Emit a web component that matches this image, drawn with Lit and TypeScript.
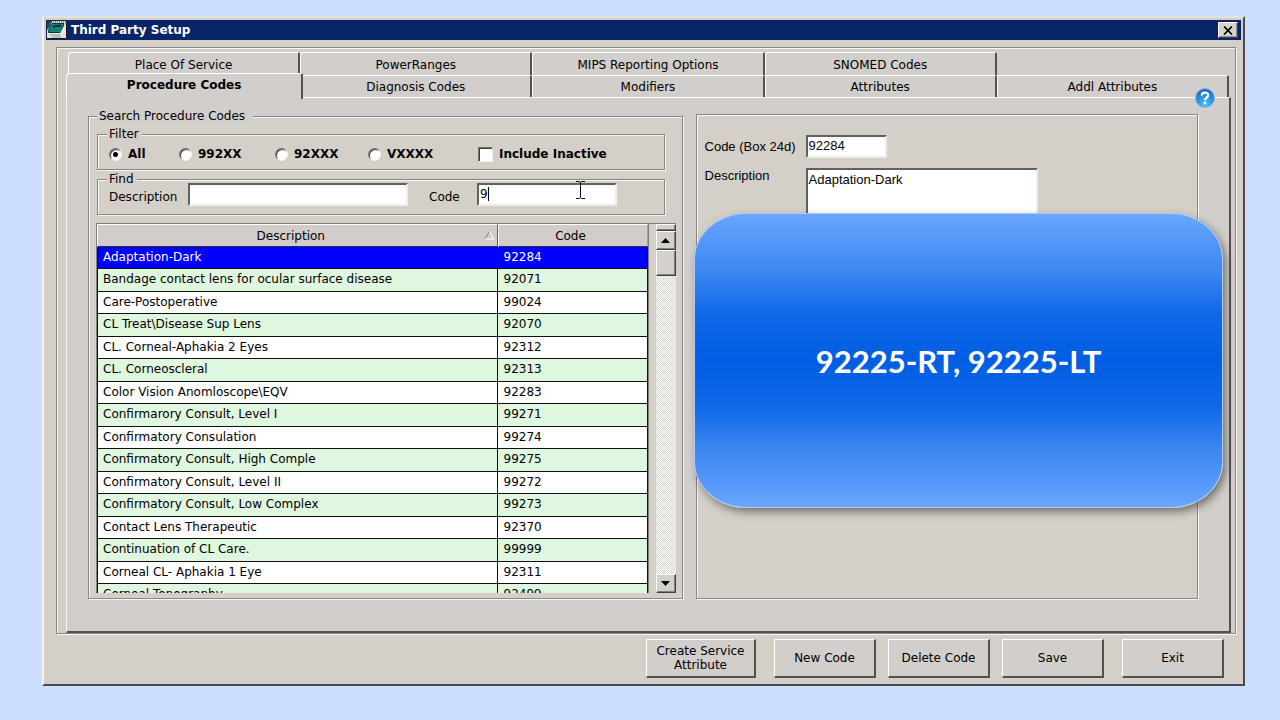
import { LitElement, html, css, svg } from "lit";
import { customElement, state } from "lit/decorators.js";
import { classMap } from "lit/directives/class-map.js";

interface Procedure {
  description: string;
  code: string;
}

const PROCEDURES: Procedure[] = [
  { description: "Adaptation-Dark", code: "92284" },
  { description: "Bandage contact lens for ocular surface disease", code: "92071" },
  { description: "Care-Postoperative", code: "99024" },
  { description: "CL Treat\\Disease Sup Lens", code: "92070" },
  { description: "CL. Corneal-Aphakia 2 Eyes", code: "92312" },
  { description: "CL. Corneoscleral", code: "92313" },
  { description: "Color Vision Anomloscope\\EQV", code: "92283" },
  { description: "Confirmarory Consult, Level I", code: "99271" },
  { description: "Confirmatory Consulation", code: "99274" },
  { description: "Confirmatory Consult, High Comple", code: "99275" },
  { description: "Confirmatory Consult, Level II", code: "99272" },
  { description: "Confirmatory Consult, Low Complex", code: "99273" },
  { description: "Contact Lens Therapeutic", code: "92370" },
  { description: "Continuation of CL Care.", code: "99999" },
  { description: "Corneal CL- Aphakia 1 Eye", code: "92311" },
  { description: "Corneal Topography", code: "92499" },
];

const BACK_TABS = ["Place Of Service", "PowerRanges", "MIPS Reporting Options", "SNOMED Codes"];
const FRONT_TABS = ["Procedure Codes", "Diagnosis Codes", "Modifiers", "Attributes", "Addl Attributes"];
const FILTERS = ["All", "992XX", "92XXX", "VXXXX"];

@customElement("procedure-grid")
export class ProcedureGrid extends LitElement {
  @state() private selected = 0;

  static styles = css`
    :host {
      display: flex;
      gap: 7px;
      min-height: 0;
      overflow: hidden;
      border-top: 1px solid #808080;
      border-left: 1px solid #808080;
    }
    .viewport {
      flex: 1;
      min-width: 0;
      overflow: hidden;
      border-right: 1px solid #808080;
    }
    table {
      width: 100%;
      border-collapse: separate;
      border-spacing: 0;
      table-layout: fixed;
    }
    .col-code {
      width: 150px;
    }
    th {
      height: 23px;
      box-sizing: border-box;
      padding: 0 8px 0 6px;
      font-weight: normal;
      background: #d2cdca;
      border-top: 1px solid #fff;
      border-left: 1px solid #fff;
      border-right: 1px solid #606060;
      border-bottom: 1px solid #303030;
    }
    th.last {
      padding-right: 10px;
      border-right-color: #a0a0a0;
    }
    .head {
      display: flex;
      align-items: center;
    }
    .head span {
      flex: 1;
    }
    .sort {
      width: 11px;
      height: 9px;
      margin-right: -6px;
      margin-left: 6px;
    }
    td {
      height: 22px;
      box-sizing: border-box;
      padding: 0 6px 2px;
      white-space: nowrap;
      background: #fff;
      border-bottom: 1px solid #101010;
      border-right: 1px solid #101010;
    }
    td:first-child {
      padding-left: 5px;
      border-left: 1px solid #101010;
    }
    tr:nth-child(even) td {
      height: 23px;
      background: #dff6df;
    }
    tr.selected td {
      background: #0000ff;
      color: #fff;
    }
    .scroll {
      width: 20px;
      display: flex;
      flex-direction: column;
      background: repeating-conic-gradient(#fff 0 25%, #d6d2cc 0 50%) 0 0 / 2px 2px;
    }
    .scroll button,
    .split,
    .thumb {
      flex: none;
      box-sizing: border-box;
      background: #d4d0cb;
      border: 1px solid;
      border-color: #fff #404040 #404040 #fff;
      box-shadow: inset -1px -1px #808080;
    }
    .scroll button {
      height: 19px;
      padding: 0;
      display: grid;
      place-items: center;
    }
    .split {
      height: 7px;
    }
    .thumb {
      height: 26px;
    }
    .track {
      flex: 1;
    }
  `;

  render() {
    return html`
      <div class="viewport">
        <table>
          <colgroup>
            <col />
            <col class="col-code" />
          </colgroup>
          <thead>
            <tr>
              <th scope="col">
                <div class="head">
                  <span>Description</span>
                  <svg class="sort" viewBox="0 0 11 9">
                    <path d="M1 8L5.5 .5" stroke="#808080" fill="none" />
                    <path d="M5.5 .5L10 8H1" stroke="#fff" fill="none" />
                  </svg>
                </div>
              </th>
              <th scope="col" class="last">Code</th>
            </tr>
          </thead>
          <tbody>
            ${PROCEDURES.map(
              (row, i) => html`<tr
                class=${classMap({ selected: i === this.selected })}
                @click=${() => (this.selected = i)}
              >
                <td>${row.description}</td>
                <td>${row.code}</td>
              </tr>`
            )}
          </tbody>
        </table>
      </div>
      <div class="scroll">
        <div class="split"></div>
        <button type="button" aria-label="Scroll up">
          <svg width="9" height="5" viewBox="0 0 9 5"><path d="M0 5L4.5 0L9 5Z" /></svg>
        </button>
        <div class="thumb"></div>
        <div class="track"></div>
        <button type="button" aria-label="Scroll down">
          <svg width="9" height="5" viewBox="0 0 9 5"><path d="M0 0L4.5 5L9 0Z" /></svg>
        </button>
      </div>
    `;
  }
}

@customElement("app-root")
export class AppRoot extends LitElement {
  @state() private filter = "All";

  static styles = css`
    :host {
      display: flex;
      box-sizing: border-box;
      height: 100vh;
      padding: 16px 35px 34px 42px;
      background: #cedeff;
      color: #000;
      font: 12px/14px "DejaVu Sans", sans-serif;
    }
    button,
    input,
    textarea {
      font: inherit;
      color: inherit;
      border-radius: 0;
    }
    .window {
      position: relative;
      flex: 1;
      min-width: 0;
      display: flex;
      flex-direction: column;
      box-sizing: border-box;
      padding: 2px;
      background: #d4d0c8;
      border: 2px solid;
      border-color: #e4e2dc #454a54 #454a54 #f4f2ee;
    }
    .titlebar {
      flex: none;
      height: 20px;
      display: flex;
      align-items: center;
      gap: 4px;
      padding: 0 3px 0 1px;
      background: #0a246a;
      color: #fff;
      font-weight: bold;
    }
    .titlebar h1 {
      flex: 1;
      margin: 0;
      font: inherit;
    }
    .app-icon {
      width: 20px;
      height: 18px;
    }
    .close {
      width: 20px;
      height: 16px;
      padding: 0;
      display: grid;
      place-items: center;
      background: #d8d4ce;
      border: 1px solid;
      border-color: #fff #404040 #404040 #fff;
      box-shadow: inset -1px -1px #909090;
    }
    .frame {
      flex: 1;
      min-height: 0;
      display: flex;
      flex-direction: column;
      margin: 7px 5px 0 10px;
      padding: 4px 4px 0 9px;
      background: #d2cecb;
      border: 1px solid #868686;
      box-shadow: inset 1px 1px #f8f6f2, 1px 1px #f8f6f2;
    }
    .tabs {
      flex: none;
      display: grid;
      grid-template-columns: repeat(5, 1fr);
      grid-template-rows: 23px 22px;
      padding: 0 2px;
    }
    .tab {
      box-sizing: border-box;
      padding: 1px 0 0;
      background: #d2cecb;
      border: solid #fff;
      border-width: 1px 2px 0 1px;
      border-right-color: #55504e;
      border-radius: 3px 2px 0 0;
    }
    .tab.front {
      grid-row: 2;
    }
    .tab.active {
      position: relative;
      margin: -2px -3px -2px -2px;
      padding-bottom: 4px;
      font-weight: bold;
    }
    .pane {
      flex: 1;
      min-height: 0;
      display: flex;
      gap: 12px;
      padding: 11px 30px 31px 21px;
      border: solid;
      border-width: 1px 2px 2px 1px;
      border-color: #fff #55504e #55504e #f4f2ee;
    }
    fieldset {
      min-width: 0;
      box-sizing: border-box;
      margin: 0 1px 1px 0;
      padding: 0;
      border: 1px solid #868686;
      box-shadow: inset 1px 1px #f8f6f2, 1px 1px #f8f6f2;
      background: #d4d0c8;
    }
    legend {
      padding: 0 3px 0 2px;
      background: #d3cfca;
    }
    .search {
      flex: 597 1 0;
      display: flex;
      flex-direction: column;
      padding: 4px 6px 5px 8px;
    }
    .search > legend {
      padding-right: 8px;
      background: #d2cecb;
    }
    .sub {
      flex: none;
      margin: 0 11px 2px 0;
      padding: 0 10px 0 11px;
    }
    .sub legend {
      margin-left: -2px;
    }
    .filters {
      display: grid;
      grid-template-columns: 70px 96px 93px 110px 1fr;
      align-items: center;
      height: 26px;
      padding-bottom: 2px;
      font-weight: bold;
    }
    .option {
      display: flex;
      align-items: center;
      gap: 6px;
      white-space: nowrap;
    }
    .option input {
      flex: none;
      appearance: none;
      width: 13px;
      height: 13px;
      margin: 0;
      background: #fff;
      border: 1px solid;
      border-color: #707070 #f4f2ee #f4f2ee #707070;
      box-shadow: inset 1px 1px #404040;
    }
    .option input[type="radio"] {
      border-radius: 50%;
    }
    .option input[type="radio"]:checked {
      background: radial-gradient(circle, #000 2px, #fff 3px);
    }
    .option input[type="checkbox"] {
      width: 15px;
      height: 15px;
    }
    .find {
      display: grid;
      grid-template-columns: 79px 220px 69px 140px;
      height: 31px;
      margin-top: -3px;
    }
    .find label {
      padding-top: 7px;
    }
    .find .code-label {
      padding-left: 21px;
    }
    .field {
      box-sizing: border-box;
      width: 100%;
      height: 23px;
      margin: 0;
      padding: 0 2px 2px 1px;
      background: #fff;
      border: 2px solid;
      border-color: #606060 #f0eee8 #f0eee8 #606060;
      outline: none;
    }
    .field-wrap {
      position: relative;
    }
    .caret {
      position: absolute;
      left: 11px;
      top: 4px;
      width: 1px;
      height: 14px;
      background: #000;
    }
    .pointer {
      position: absolute;
      right: 32px;
      top: -2px;
      width: 9px;
      height: 18px;
    }
    procedure-grid {
      flex: 1;
      margin: 6px 0 0 -1px;
    }
    .details {
      flex: 501 1 0;
      margin-top: 5px;
      padding: 20px 7px 19px 8px;
      font: 13px/15px "Liberation Sans", sans-serif;
    }
    .detail-grid {
      display: grid;
      grid-template-columns: 101px 1fr;
      row-gap: 10px;
    }
    .detail-grid label {
      white-space: nowrap;
    }
    .code-name {
      padding-top: 4px;
    }
    .code-value {
      width: 81px;
    }
    .description-value {
      width: 232px;
      height: 76px;
      padding-top: 2px;
      resize: none;
    }
    .help {
      position: absolute;
      top: 70px;
      right: 28px;
      width: 20px;
      height: 20px;
      padding: 0;
      border: 0;
      background: none;
    }
    .help svg {
      display: block;
    }
    .actions,
    .action-group {
      display: flex;
    }
    .actions {
      flex: none;
      justify-content: flex-end;
      gap: 18px;
      height: 39px;
      padding: 5px 17px 4px;
    }
    .action-group {
      gap: 12px;
    }
    .action {
      width: 102px;
      padding: 0 4px;
      background: #d2cecb;
      border: solid;
      border-width: 1px 2px 2px 1px;
      border-color: #fff #55504e #55504e #fff;
    }
    .action.wide {
      width: 110px;
    }
    .callout {
      position: absolute;
      top: 195px;
      right: 20px;
      width: 529px;
      height: 295px;
      box-sizing: border-box;
      display: grid;
      place-items: center;
      border: 1px solid #b4cbed;
      border-radius: 52px / 46px;
      background: linear-gradient(#68a6ff, #3c86f0 20%, #1068e8 34%, #005ee2 50%, #1068e8 66%, #3c86f0 80%, #68a6ff);
      box-shadow: 3px 4px 8px rgba(0, 0, 0, 0.45);
      color: #fff;
      font: bold 31px/40px Lato, sans-serif;
    }
  `;

  private tab(label: string, front: boolean) {
    const active = label === "Procedure Codes";
    return html`<button
      type="button"
      role="tab"
      aria-selected=${active}
      class=${classMap({ tab: true, front, active })}
    >${label}</button>`;
  }

  private appIcon() {
    return html`<svg class="app-icon" viewBox="0 0 20 18" aria-hidden="true">
      ${svg`
        <path d="M0 0H20V18H0Z" fill="#dfe6e2" />
        <path d="M19.500 0V17.500H0" stroke="#1a1a1a" fill="none" />
        <path d="M0 0H5L1 8H0ZM2 1H19" fill="#33423f" stroke="#33423f" stroke-dasharray="1 1" />
        <path d="M5 2.500H17L14 11.500H1.500C1.500 8 3.500 4 5 2.500Z" fill="#158078" stroke="#083c3c" />
        <path d="M6 5.500L14 4.500" stroke="#062c30" stroke-width="2" />
        <path d="M3 14H13M5 16H14" stroke="#8c9c98" />
        <path d="M14 12L17 7" stroke="#fff" stroke-width="1.500" />
      `}
    </svg>`;
  }

  render() {
    return html`
      <main class="window">
        <header class="titlebar">
          ${this.appIcon()}
          <h1>Third Party Setup</h1>
          <button class="close" type="button" aria-label="Close">
            <svg width="10" height="9" viewBox="0 0 10 9">
              <path d="M1 .5L9 8.500M9 .5L1 8.500" stroke="#000" stroke-width="1.700" />
            </svg>
          </button>
        </header>

        <section class="frame">
          <div class="tabs" role="tablist">
            ${BACK_TABS.map((t) => this.tab(t, false))} ${FRONT_TABS.map((t) => this.tab(t, true))}
          </div>
          <div class="pane" role="tabpanel">
            <fieldset class="search">
              <legend>Search Procedure Codes</legend>
              <fieldset class="sub">
                <legend>Filter</legend>
                <div class="filters">
                  ${FILTERS.map(
                    (f) => html`<label class="option">
                      <input
                        type="radio"
                        name="filter"
                        .checked=${f === this.filter}
                        @change=${() => (this.filter = f)}
                      />${f}</label>`
                  )}
                  <label class="option"><input type="checkbox" />Include Inactive</label>
                </div>
              </fieldset>
              <fieldset class="sub">
                <legend>Find</legend>
                <div class="find">
                  <label for="find-description">Description</label>
                  <input id="find-description" class="field" type="text" />
                  <label class="code-label" for="find-code">Code</label>
                  <div class="field-wrap">
                    <input id="find-code" class="field" type="text" value="9" />
                    <span class="caret"></span>
                    <svg class="pointer" viewBox="0 0 9 18">
                      <path d="M0 .5H3.500L4.500 1.500L5.500 .5H9M4.500 1V17M0 17.500H3.500L4.500 16.500L5.500 17.500H9" stroke="#000" fill="none" />
                    </svg>
                  </div>
                </div>
              </fieldset>
              <procedure-grid></procedure-grid>
            </fieldset>

            <fieldset class="details">
              <div class="detail-grid">
                <label class="code-name" for="code">Code (Box 24d)</label>
                <input id="code" class="field code-value" type="text" value="92284" />
                <label for="description">Description</label>
                <textarea id="description" class="field description-value">Adaptation-Dark</textarea>
              </div>
            </fieldset>
          </div>
        </section>

        <footer class="actions">
          <button class="action wide" type="button">Create Service Attribute</button>
          <div class="action-group">
            <button class="action" type="button">New Code</button>
            <button class="action" type="button">Delete Code</button>
            <button class="action" type="button">Save</button>
          </div>
          <button class="action" type="button">Exit</button>
        </footer>

        <button class="help" type="button" aria-label="Help">
          <svg width="20" height="20" viewBox="0 0 20 20">
            <defs>
              <radialGradient id="ball" cx="50%" cy="85%" r="85%">
                <stop offset="0" stop-color="#4cc0f4" />
                <stop offset="1" stop-color="#1a62c0" />
              </radialGradient>
            </defs>
            <circle cx="10" cy="10" r="9.500" fill="url(#ball)" stroke="#8ab8e4" stroke-width="1" />
            <path d="M6.800 7.500C6.800 3.500 13.400 3.600 13.200 7.400C13.100 9.600 10 9.700 10 12.300" stroke="#fff" stroke-width="2.200" fill="none" />
            <circle cx="10" cy="15" r="1.400" fill="#fff" />
          </svg>
        </button>

        <div class="callout" role="note">92225-RT, 92225-LT</div>
      </main>
    `;
  }
}
